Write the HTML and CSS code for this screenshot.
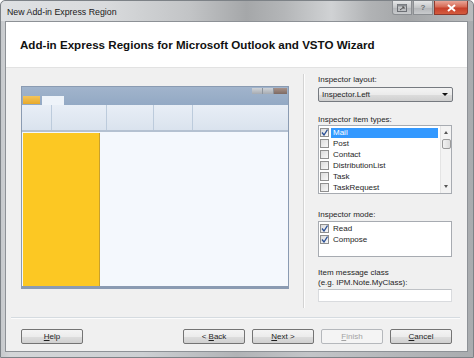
FILE: index.html
```html
<!DOCTYPE html>
<html>
<head>
<meta charset="utf-8">
<link rel="stylesheet" href="styles.css">
</head>
<body>
<div class="window">
  <div class="titlebar">
    <span class="title">New Add-in Express Region</span>
    <div class="caption-btns">
      <span class="cbtn restore"><svg width="10" height="8" viewBox="0 0 10 8"><rect x="0.5" y="0.5" width="9" height="7" fill="none" stroke="#6d7075"/><rect x="0.5" y="0.5" width="9" height="2" fill="#8a8d92"/><path d="M3 6 L7 3 M5 3 H7 V5" stroke="#555" fill="none"/></svg></span>
      <span class="cbtn help">?</span>
      <span class="cbtn close"><svg width="9" height="8" viewBox="0 0 9 8"><path d="M1 1 L8 7 M8 1 L1 7" stroke="#fff" stroke-width="2"/></svg></span>
    </div>
  </div>
  <div class="client">
    <div class="header">
      <h1>Add-in Express Regions for Microsoft Outlook and VSTO Wizard</h1>
    </div>
    <div class="main">
      <div class="preview-pane">
        <div class="preview">
          <div class="pv-title">
            <div class="pv-tabs"><span class="tab-file"></span><span class="tab-home"></span></div>
            <div class="pv-winbtns"><span></span><span></span><span class="pv-x"></span></div>
          </div>
          <div class="pv-ribbon">
            <span class="grp g1"></span><span class="grp g2"></span><span class="grp g3"></span><span class="grp g4"></span><span class="grp g5"></span>
          </div>
          <div class="pv-body">
            <div class="pv-region"></div>
            <div class="pv-content"></div>
          </div>
        </div>
      </div>
      <div class="vsep"></div>
      <div class="options">
        <div class="label">Inspector layout:</div>
        <div class="combo"><span>Inspector.Left</span><span class="arrow"></span></div>

        <div class="label l2">Inspector item types:</div>
        <div class="listbox lb1">
          <div class="items">
            <div class="row"><span class="chk on"><svg width="7" height="7" viewBox="0 0 7 7"><path d="M1 3.5 L3 6 L6.5 0.5" stroke="#2a4f95" stroke-width="1.3" fill="none"/></svg></span><span class="txt sel">Mail</span></div>
            <div class="row"><span class="chk"></span><span class="txt">Post</span></div>
            <div class="row"><span class="chk"></span><span class="txt">Contact</span></div>
            <div class="row"><span class="chk"></span><span class="txt">DistributionList</span></div>
            <div class="row"><span class="chk"></span><span class="txt">Task</span></div>
            <div class="row"><span class="chk"></span><span class="txt">TaskRequest</span></div>
          </div>
          <div class="scrollbar">
            <span class="sb-up"></span>
            <span class="sb-thumb"></span>
            <span class="sb-down"></span>
          </div>
        </div>

        <div class="label l3">Inspector mode:</div>
        <div class="listbox lb2">
          <div class="items">
            <div class="row"><span class="chk on"><svg width="7" height="7" viewBox="0 0 7 7"><path d="M1 3.5 L3 6 L6.5 0.5" stroke="#2a4f95" stroke-width="1.3" fill="none"/></svg></span><span class="txt">Read</span></div>
            <div class="row"><span class="chk on"><svg width="7" height="7" viewBox="0 0 7 7"><path d="M1 3.5 L3 6 L6.5 0.5" stroke="#2a4f95" stroke-width="1.3" fill="none"/></svg></span><span class="txt">Compose</span></div>
          </div>
        </div>

        <div class="label l4">Item message class<br>(e.g. IPM.Note.MyClass):</div>
        <div class="textbox"></div>
      </div>
    </div>
    <div class="hsep"></div>
    <div class="buttons">
      <button class="btn"><u>H</u>elp</button>
      <div class="spacer"></div>
      <button class="btn">&lt; <u>B</u>ack</button>
      <button class="btn"><u>N</u>ext &gt;</button>
      <button class="btn disabled"><u>F</u>inish</button>
      <button class="btn"><u>C</u>ancel</button>
    </div>
  </div>
  <div class="bottomframe"></div>
</div>
</body>
</html>
```

FILE: styles.css
```css
* { box-sizing: border-box; }
html, body { margin: 0; padding: 0; }
body {
  width: 474px;
  height: 358px;
  overflow: hidden;
  font-family: "Liberation Sans", Arial, sans-serif;
  color: #1e1e1e;
}
.window {
  width: 474px;
  height: 358px;
  display: flex;
  flex-direction: column;
  background: linear-gradient(90deg, #c6c9cc 0, #d4d6d8 2%, #cdd0d3 30%, #b1b3b6 50%, #c3c5c8 65%, #b4b6b9 85%, #a9acaf 100%);
  border: 1px solid #7d8287;
  border-radius: 5px 5px 0 0;
}
.titlebar {
  height: 20px;
  display: flex;
  align-items: flex-start;
  background: linear-gradient(90deg, #dfe1e3 0, #d9dbdd 22%, #c2c4c6 40%, #a5a7a9 52%, #b4b6b8 60%, #d0d2d4 70%, #b1b3b5 78%, #a3a5a7 86%, #b9bbbd 100%);
  border-radius: 5px 5px 0 0;
}
.title {
  font-size: 8.8px;
  color: #1a1a1a;
  padding: 6px 0 0 6px;
  line-height: 10px;
}
.caption-btns {
  margin-left: auto;
  margin-right: 5px;
  display: flex;
  gap: 1px;
}
.cbtn {
  height: 14px;
  display: flex;
  align-items: center;
  justify-content: center;
  border: 1px solid #8b8e92;
  border-top: none;
  background: linear-gradient(#e6e7e8, #c5c7c9 50%, #b3b5b8 51%, #c9cbcd);
  font-size: 8px;
  color: #6a6d72;
}
.cbtn.restore { width: 20px; border-radius: 0 0 0 3px; }
.cbtn.help { width: 20px; font-weight: bold; }
.cbtn.close {
  width: 34px;
  border-radius: 0 0 3px 0;
  border-color: #8e3a2e;
  background: linear-gradient(#e9a597, #d66a55 45%, #c7402b 55%, #d45b3e);
}
.client {
  margin: 0 5px 0 4px;
  height: 331px;
  background: #f0f0f0;
  border: 1px solid #8d9196;
  display: flex;
  flex-direction: column;
}
.header {
  height: 46px;
  background: #fff;
  display: flex;
  align-items: center;
  padding-left: 14px;
  border-bottom: 1px solid #e2e2e2;
}
.header h1 {
  margin: 0;
  font-size: 11.6px;
  font-weight: bold;
  color: #111;
}
.main {
  display: flex;
  height: 249px;
}
.preview-pane {
  width: 297px;
  padding: 18px 0 0 15px;
}
.preview {
  width: 268px;
  height: 203px;
  border: 1px solid #8a9bb2;
  display: flex;
  flex-direction: column;
  background: #dde6f1;
}
.pv-title {
  height: 18px;
  background: linear-gradient(#a1b4cc, #93a9c4);
  display: flex;
  justify-content: space-between;
  align-items: flex-end;
}
.pv-tabs { display: flex; gap: 2px; padding-left: 1px; }
.tab-file {
  width: 17px; height: 8px;
  background: linear-gradient(#f4c45a, #e7a92a);
}
.tab-home {
  width: 22px; height: 9px;
  background: #eef3f9;
}
.pv-winbtns {
  display: flex;
  align-self: flex-start;
  margin: 1px 1px 0 0;
}
.pv-winbtns span {
  width: 11px; height: 6px;
  background: linear-gradient(#cfd3d8, #a6abb2);
  border-right: 1px solid #8d949d;
}
.pv-winbtns .pv-x {
  width: 13px;
  background: linear-gradient(#a8928a, #7d6a63);
  border-right: none;
}
.pv-ribbon {
  height: 27px;
  display: flex;
  background: linear-gradient(#e8eef6, #dae3ee);
  border-bottom: 2px solid #b4c1d1;
}
.grp { height: 100%; border-right: 1px solid #bccbdc; }
.g1 { width: 30px; }
.g2 { width: 55px; }
.g3 { width: 47px; }
.g4 { width: 39px; }
.g5 { flex: 1; border-right: none; }
.pv-body {
  flex: 1;
  display: flex;
  padding: 1px 1px 0 1px;
  background: #f4f8fd;
  border-bottom: 2px solid #8a9bb2;
}
.pv-region {
  width: 77px;
  background: #fcc823;
  border-right: 1px solid #c9a12a;
}
.pv-content { flex: 1; background: #f4f8fd; }
.vsep {
  width: 2px;
  margin: 6px 0 9px 0;
  border-left: 1px solid #d3d3d3;
  border-right: 1px solid #fdfdfd;
}
.options {
  padding: 7px 0 0 13px;
  width: 150px;
  display: flex;
  flex-direction: column;
  font-size: 8px;
}
.label {
  line-height: 10px;
  height: 10px;
  white-space: nowrap;
}
.combo {
  margin-top: 2px;
  width: 135px;
  height: 15px;
  border: 1px solid #767a80;
  border-radius: 2px;
  background: linear-gradient(#f3f3f3, #ebebeb 50%, #dddddd 51%, #cfcfcf);
  display: flex;
  align-items: center;
  padding-left: 3px;
  font-size: 8px;
}
.combo .arrow {
  margin-left: auto;
  margin-right: 4px;
  width: 0; height: 0;
  border-left: 3px solid transparent;
  border-right: 3px solid transparent;
  border-top: 3px solid #111;
}
.l2 { margin-top: 13px; }
.listbox {
  width: 134px;
  border: 1px solid #a7abb1;
  background: #fff;
  display: flex;
}
.lb1 { height: 69px; }
.lb2 { height: 36px; margin-top: 1px; }
.items { flex: 1; padding-top: 1px; }
.row {
  height: 11px;
  display: flex;
  align-items: center;
}
.chk {
  width: 9px; height: 9px;
  margin-left: 1px;
  border: 1px solid #8f8f8f;
  background: linear-gradient(135deg, #dcdcdc, #f8f8f8);
  display: flex;
  align-items: center;
  justify-content: center;
}
.txt {
  margin-left: 2px;
  padding-left: 2px;
  line-height: 10px;
  height: 10px;
  font-size: 8px;
}
.txt.sel {
  background: #3399ff;
  color: #fff;
  width: 107px;
}
.scrollbar {
  width: 11px;
  margin-left: 1px;
  background: #f3f3f3;
  border-left: 1px solid #e4e4e4;
  display: flex;
  flex-direction: column;
  align-items: center;
}
.sb-up, .sb-down {
  width: 0; height: 0;
  border-left: 2.5px solid transparent;
  border-right: 2.5px solid transparent;
}
.sb-up { border-bottom: 3px solid #555; margin-top: 5px; }
.sb-down { border-top: 3px solid #555; margin-top: auto; margin-bottom: 5px; }
.sb-thumb {
  width: 9px; height: 10px;
  margin-top: 5px;
  border: 1px solid #9a9a9a;
  border-radius: 2px;
  background: linear-gradient(90deg, #f2f2f2, #dcdcdc);
}
.l3 { margin-top: 16px; }
.l4 { margin-top: 11px; height: 20px; }
.textbox {
  margin-top: 1px;
  width: 134px;
  height: 13px;
  border: 1px solid #d9dbde;
  border-top-color: #bfc2c6;
  background: #fff;
}
.hsep {
  margin: 0 7px 0 5px;
  height: 2px;
  border-top: 1px solid #d5dbe0;
  border-bottom: 1px solid #fbfbfb;
}
.buttons {
  display: flex;
  padding: 10px 0 0 15px;
  gap: 7px;
}
.spacer { width: 86px; }
.btn {
  width: 62px;
  height: 15px;
  padding: 0;
  font-family: "Liberation Sans", Arial, sans-serif;
  font-size: 8px;
  color: #1e1e1e;
  border: 1px solid #747474;
  border-radius: 2px;
  background: linear-gradient(#f4f4f4, #ececec 50%, #dedede 51%, #d0d0d0);
}
.btn.disabled {
  color: #a3a3a3;
  border-color: #b5b8bc;
  background: #f4f4f4;
}
.bottomframe { flex: 1; }
```
